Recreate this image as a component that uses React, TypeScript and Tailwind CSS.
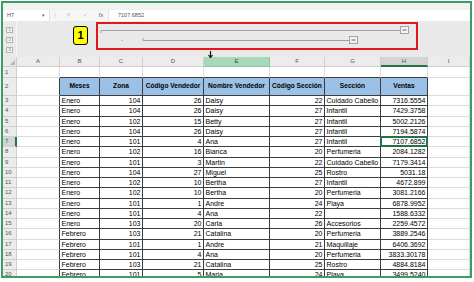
import React from "react";

const FONT = "font-['Liberation_Sans',Arial,sans-serif]";

type Row = [string, number, number, string, number, string, string];

const rows: Row[] = [
  ["Enero", 104, 26, "Daisy", 22, "Cuidado Cabello", "7316.5554"],
  ["Enero", 104, 26, "Daisy", 27, "Infantil", "7429.3758"],
  ["Enero", 102, 15, "Betty", 27, "Infantil", "5002.2126"],
  ["Enero", 104, 26, "Daisy", 27, "Infantil", "7194.5874"],
  ["Enero", 101, 4, "Ana", 27, "Infantil", "7107.6852"],
  ["Enero", 102, 16, "Bianca", 20, "Perfumeria", "2084.1282"],
  ["Enero", 101, 3, "Martin", 22, "Cuidado Cabello", "7179.3414"],
  ["Enero", 104, 27, "Miguel", 25, "Rostro", "5031.18"],
  ["Enero", 102, 10, "Bertha", 27, "Infantil", "4672.899"],
  ["Enero", 102, 10, "Bertha", 20, "Perfumeria", "3081.2166"],
  ["Enero", 101, 1, "Andre", 24, "Playa", "6878.9952"],
  ["Enero", 101, 4, "Ana", 22, "", "1588.6332"],
  ["Enero", 103, 20, "Carla", 26, "Accesorios", "2259.4572"],
  ["Febrero", 103, 21, "Catalina", 20, "Perfumeria", "3889.2546"],
  ["Febrero", 101, 1, "Andre", 21, "Maquillaje", "6406.3692"],
  ["Febrero", 101, 4, "Ana", 20, "Perfumeria", "3833.30178"],
  ["Febrero", 103, 21, "Catalina", 25, "Rostro", "4884.8184"],
  ["Febrero", 101, 5, "Maria", 24, "Playa", "3499.5240"],
];

const headers = ["Meses", "Zona", "Código Vendedor", "Nombre Vendedor", "Código Sección", "Sección", "Ventas"];
const letters = ["A", "B", "C", "D", "E", "F", "G", "H", "I"];
const numericCols = [2, 3, 5, 7];

// border for a sheet cell; r = excel row, c = 1..9 (A..I)
function borders(r: number, c: number) {
  const inTable = r >= 2 && c >= 2 && c <= 8;
  if (inTable) return "border-r border-b border-[#3c3c3c]";
  if (c === 1 && r >= 2) return "border-r border-b border-r-[#3c3c3c] border-b-[#dcdcdc]";
  if (r === 1 && c >= 2 && c <= 8) return "border-r border-b border-r-[#dcdcdc] border-b-[#3c3c3c]";
  return "border-r border-b border-[#dcdcdc]";
}

function FormulaBar() {
  return (
    <div className="h-[11px] shrink-0 flex items-center bg-white text-[5.5px] text-[#505050]">
      <div className="w-[47px] h-full flex items-center justify-between pl-[4px] pr-[4px] border-r border-[#e2e2e2]">
        <span>H7</span>
        <span className="text-[5px] text-[#666]">▾</span>
      </div>
      <div className="w-[10px] h-full flex items-center justify-center text-[#b8b8b8] bg-[#f6f6f6]">⋮</div>
      <div className="w-[16px] h-full flex items-center justify-center text-[#c4c4c4] bg-[#f6f6f6]">✕</div>
      <div className="w-[18px] h-full flex items-center justify-center text-[#c4c4c4] bg-[#f6f6f6]">✓</div>
      <div className="w-[14px] h-full flex items-center justify-center italic text-[#555] bg-[#f6f6f6]">fx</div>
      <div className="flex-1 h-full flex items-center pl-[9px] border-l border-[#e2e2e2]">7107.6852</div>
    </div>
  );
}

function OutlineArea() {
  return (
    <div className="h-[36px] shrink-0 bg-[#e9e9e9] flex relative">
      <div className="w-[14px] flex flex-col items-center pt-[6px] gap-[4px] border-r border-[#f4f4f4]">
        {["1", "2", "3"].map((n) => (
          <div
            key={n}
            className="w-[7px] h-[6px] border border-[#b5b5b5] bg-[#f2f2f2] text-[4px] leading-none flex items-center justify-center text-[#777]"
          >
            {n}
          </div>
        ))}
      </div>
      <div className="ml-[56px] mt-[5px] w-[15px] h-[19px] bg-[#ffff00] border border-black rounded-[3px] flex items-center justify-center text-[11px] font-bold text-black">
        1
      </div>
      <div className="ml-[8px] mt-[1px] w-[322px] h-[28px] border-2 border-[#e3161c]">
        <svg width="318" height="24" viewBox="0 0 318 24" className="block">
          <g stroke="#a2a2a2" strokeWidth="1" fill="none">
            <path d="M3 9 V6.5 H302.5" />
            <path d="M45 14 V16.5 H251.5" />
          </g>
          <rect x="23.5" y="16" width="1" height="1" fill="#9a9a9a" />
          <rect x="302.5" y="2.5" width="8" height="7" fill="#f3f3f3" stroke="#a2a2a2" />
          <path d="M304.5 6 H308.5" stroke="#666" />
          <rect x="251.5" y="12.5" width="8" height="7" fill="#f3f3f3" stroke="#a2a2a2" />
          <path d="M253.5 16 H257.5" stroke="#666" />
        </svg>
      </div>
      <svg width="5" height="7" viewBox="0 0 5 7" className="absolute left-[205px] bottom-[-1px]">
        <path d="M2.5 0 V6 M0.5 4 L2.5 6.5 L4.5 4" stroke="#111" strokeWidth="1.2" fill="none" />
      </svg>
    </div>
  );
}

export default function App() {
  const sheetRows: React.ReactNode[] = [];

  // column letter header
  sheetRows.push(
    <div key="corner" className="bg-[#e9e9e9] border-r border-b border-[#cfcfcf] flex items-end justify-end p-[1px]">
      <div className="w-0 h-0 border-l-[5px] border-l-transparent border-b-[5px] border-b-[#b5b5b5]" />
    </div>
  );
  letters.forEach((l) => {
    const cls =
      l === "E"
        ? "bg-[#a7d8b9] text-[#215c3b] border-r border-b border-[#8cc4a1]"
        : l === "H"
        ? "bg-[#d4d4d4] text-[#217346] border-r border-[#cfcfcf] border-b-2 border-b-[#217346]"
        : "bg-[#ececec] text-[#555] border-r border-b border-[#cfcfcf]";
    sheetRows.push(
      <div key={"h" + l} className={`${cls} flex items-center justify-center text-[6px]`}>
        {l}
      </div>
    );
  });

  for (let r = 1; r <= 20; r++) {
    const active = r === 7;
    sheetRows.push(
      <div
        key={"rh" + r}
        className={`${active ? "bg-[#d4d4d4] text-[#217346] border-r-2 border-r-[#217346] border-b border-b-[#cfcfcf]" : "bg-[#ececec] text-[#555] border-r border-b border-[#cfcfcf]"} flex items-center pl-[2px] text-[6px]`}
      >
        {r}
      </div>
    );
    for (let c = 1; c <= 9; c++) {
      let content: React.ReactNode = null;
      let align = "justify-start pl-[1.5px] text-[7px]";
      let extra = "";
      if (r === 2 && c >= 2 && c <= 8) {
        content = headers[c - 2];
        align = "justify-center text-[6.6px]";
        extra = "bg-[#9bc2e6] font-bold";
      } else if (r >= 3 && c >= 2 && c <= 8) {
        const v = rows[r - 3][c - 2];
        content = v;
        if (numericCols.includes(c - 1)) align = "justify-end pr-[1.5px] text-[7px]";
      }
      const isActive = r === 7 && c === 8;
      sheetRows.push(
        <div
          key={r + "-" + c}
          className={`${borders(r, c)} ${extra} ${align} relative flex items-center whitespace-nowrap text-black leading-none overflow-visible`}
        >
          {content}
          {isActive && <div className="absolute inset-[-1px] border-2 border-[#217346]" />}
        </div>
      );
    }
  }

  return (
    <div className="w-[474px] h-[282px] bg-white pl-px pt-px">
      <div className={`w-[471px] h-[277px] border-2 border-[#3a9d66] overflow-hidden flex flex-col bg-white ${FONT}`}>
        <div className="h-[7px] shrink-0 bg-[#f1f1f1]" />
        <FormulaBar />
        <OutlineArea />
        <div className="grid grid-cols-[14px_43px_40px_43px_61px_66px_55px_56px_47px_1fr] grid-rows-[10px_11px_18px_repeat(18,10.25px)] shrink-0">
          {sheetRows}
        </div>
      </div>
    </div>
  );
}
